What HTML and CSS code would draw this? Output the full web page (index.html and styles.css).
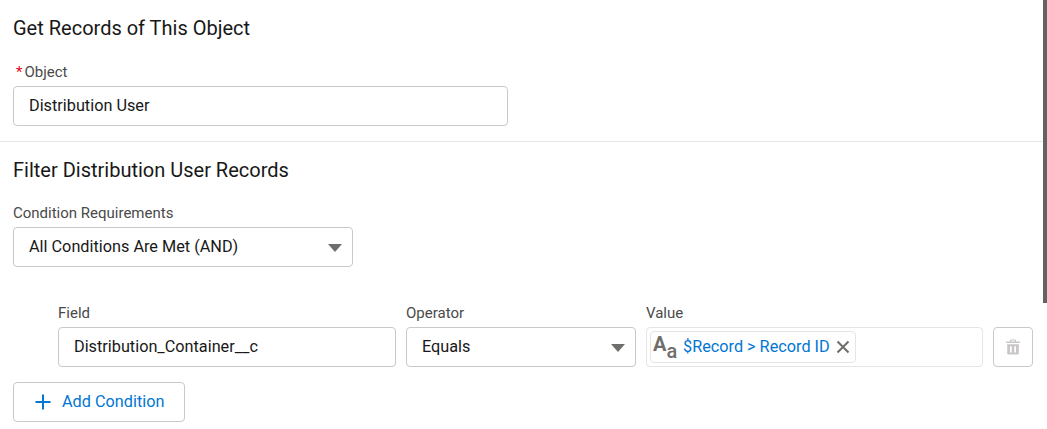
FILE: index.html
```html
<!DOCTYPE html>
<html lang="en">
<head>
  <meta charset="UTF-8" />
  <title>Get Records</title>
  <link rel="stylesheet" href="styles.css">
</head>
<body>
  <div class="scrollbar"></div>

  <section class="section section-object">
    <h2>Get Records of This Object</h2>
    <label class="label label-required"><span class="star">*</span>Object</label>
    <div class="box box-object">Distribution User</div>
  </section>

  <section class="section section-filter">
    <h2>Filter Distribution User Records</h2>
    <label class="label">Condition Requirements</label>
    <div class="box box-select box-requirements">
      All Conditions Are Met (AND)
      <span class="caret"></span>
    </div>

    <div class="condition">
      <div class="col col-field">
        <label class="label">Field</label>
        <div class="box">Distribution_Container__c</div>
      </div>
      <div class="col col-operator">
        <label class="label">Operator</label>
        <div class="box box-select">
          Equals
          <span class="caret"></span>
        </div>
      </div>
      <div class="col col-value">
        <label class="label">Value</label>
        <div class="box box-value">
          <div class="pill">
            <span class="type-icon"><span class="type-big">A</span><span class="type-small">a</span></span>
            <span class="pill-text">$Record &gt; Record ID</span>
            <svg class="pill-close" viewBox="0 0 14 14" width="14" height="14">
              <path d="M1.5 1.5l11 11M12.5 1.5l-11 11" stroke="#706e6b" stroke-width="2" fill="none" />
            </svg>
          </div>
        </div>
      </div>
      <button class="delete-btn" aria-label="Delete">
        <svg viewBox="0 0 14 16" width="14" height="16">
          <path fill="#c9c7c5" fill-rule="evenodd" d="M5 0.5h4a1 1 0 0 1 1 1V2.5h3.5a.5.5 0 0 1 .5.5v.6a.4.4 0 0 1-.4.4H.4a.4.4 0 0 1-.4-.4V3a.5.5 0 0 1 .5-.5H4V1.500a1 1 0 0 1 1-1zM5.200 1.600V2.500h3.600V1.600zM1.200 5.200h11.600V14.500a1 1 0 0 1-1 1H2.200a1 1 0 0 1-1-1zM4 7.200V13.500h1.700V7.200zM8.300 7.200V13.500H10V7.200z" />
        </svg>
      </button>
    </div>

    <button class="add-btn">
      <svg viewBox="0 0 16 16" width="16" height="16">
        <path d="M8 .5v15M.5 8h15" stroke="#0176d3" stroke-width="2" fill="none" />
      </svg>
      <span class="add-text">Add Condition</span>
    </button>
  </section>
</body>
</html>
```

FILE: styles.css
```css
:root {
  --text: #181818;
  --label: #4a4a4a;
  --border: #c9c9c9;
  --blue: #0176d3;
}
html, body {
  height: 100%;
}
body {
  margin: 0;
  background: #ffffff;
  color: var(--text);
  font-family: Roboto, sans-serif;
  font-size: 16.25px;
  overflow: hidden;
  position: relative;
}
.scrollbar {
  position: absolute;
  top: 0;
  right: 0;
  width: 4px;
  height: 303px;
  background: #636363;
}
.section {
  padding: 0 13px;
}
.section-object {
  padding-top: 16px;
  padding-bottom: 15px;
  border-bottom: 1px solid #e5e5e5;
}
.section-filter {
  padding-top: 16px;
}
h2 {
  margin: 0;
  font-size: 20px;
  font-weight: 400;
  line-height: 24px;
}
.label {
  display: block;
  height: 20px;
  font-size: 15px;
  line-height: 20px;
  color: var(--label);
}
.section-object .label {
  margin-top: 22px;
  margin-bottom: 4px;
}
.section-filter > .label {
  margin-top: 21px;
  margin-bottom: 4px;
}
.star {
  color: #ea001e;
  margin: 0 2px 0 3px;
}
.box {
  box-sizing: border-box;
  height: 40px;
  display: flex;
  align-items: center;
  padding: 0 15px 2px;
  border: 1px solid var(--border);
  border-radius: 4px;
  background: #ffffff;
  font-size: 16.25px;
}
.box-object {
  width: 495px;
}
.box-requirements {
  width: 340px;
}
.box-select {
  justify-content: space-between;
  padding-right: 10px;
}
.caret {
  width: 0;
  height: 0;
  margin-top: 3px;
  border-left: 7px solid transparent;
  border-right: 7px solid transparent;
  border-top: 8px solid #706e6b;
}
.condition {
  display: flex;
  align-items: flex-end;
  gap: 10px;
  margin-top: 36px;
  padding-left: 45px;
}
.col .label {
  margin-bottom: 4px;
}
.col-field {
  width: 338px;
}
.col-operator {
  width: 230px;
}
.col-value {
  width: 337px;
}
.box-value {
  padding: 0 3px;
  border-color: #e5e5e5;
}
.pill {
  box-sizing: border-box;
  display: flex;
  align-items: center;
  height: 32px;
  padding: 0 5px 0 3px;
  border: 1px solid #e5e5e5;
  border-radius: 4px;
}
.type-icon {
  display: flex;
  align-items: flex-start;
  width: 27px;
  height: 26px;
  margin-left: -1px;
  color: #706e6b;
  font-weight: 700;
  line-height: 1;
}
.type-big {
  font-size: 20px;
}
.type-small {
  font-size: 20px;
  font-weight: 500;
  margin-top: 7px;
}
.pill-text {
  margin: 0 0 2px 3px;
  color: var(--blue);
  font-size: 16.25px;
  white-space: nowrap;
}
.pill-close {
  margin-left: 6px;
}
.delete-btn {
  width: 40px;
  height: 40px;
  display: flex;
  align-items: center;
  justify-content: center;
  padding: 0;
  border: 1px solid var(--border);
  border-radius: 4px;
  background: #ffffff;
}
.add-btn {
  display: flex;
  align-items: center;
  box-sizing: border-box;
  gap: 11px;
  width: 172px;
  height: 40px;
  margin-top: 15px;
  padding: 0 0 0 21px;
  border: 1px solid var(--border);
  border-radius: 4px;
  background: #ffffff;
  color: var(--blue);
  font-family: Roboto, sans-serif;
  font-size: 16.25px;
}
.add-text {
  margin-bottom: 2px;
}
```
